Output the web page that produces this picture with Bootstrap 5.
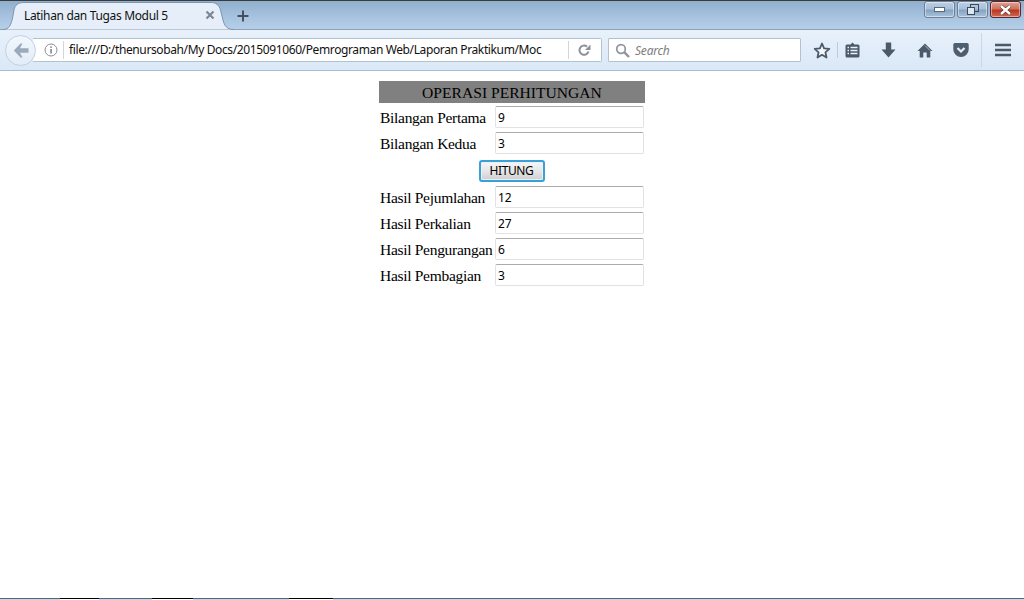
<!DOCTYPE html>
<html lang="id">
<head>
<meta charset="utf-8">
<title>Latihan dan Tugas Modul 5</title>
<link href="https://cdn.jsdelivr.net/npm/bootstrap@5.3.0/dist/css/bootstrap.min.css" rel="stylesheet">
<style>
html,body{height:600px;overflow:hidden;background:#fff}
body{font-family:"Open Sans","Noto Sans",sans-serif;color:#000;display:flex;flex-direction:column}
.titlebar{height:30px;flex:none;background:linear-gradient(#8fafcd,#a9c4e0 60%,#b5cfe9);border-top:1px solid #3b3b3b;border-bottom:1px solid #8fa0b2;padding-left:3px}
.ff-tab{width:234px;height:29px;flex:none;position:relative;margin-bottom:-1px}
.ff-tab svg{display:block}
.tab-title{position:absolute;left:21px;top:6px;font-size:12px;line-height:17px;color:#111;white-space:nowrap;font-family:"Noto Sans",sans-serif;letter-spacing:-.34px}
.tab-close{position:absolute;left:202px;top:9px}
.newtab{margin-top:9px}
.winbtns{margin-left:auto;margin-right:3px;height:18px}
.winbtn{width:31px;height:17px;border:1px solid #6d7f94;border-radius:3px;background:linear-gradient(#bcd0e5,#a8c0da 45%,#86a3c2 55%,#a9c3dd);box-shadow:inset 0 0 0 1px rgba(255,255,255,.45);display:flex;align-items:center;justify-content:center;margin-left:2px}
.winbtn.closer{background:linear-gradient(#e2a294,#d0705c 45%,#b9371f 55%,#cf6a55);border-color:#5a2530;width:31px}
.toolbar{height:41px;flex:none;background:linear-gradient(#e8f1fb,#dae8f7);border-bottom:1px solid #a9bdd0;padding-left:5px}
.backbtn{width:31px;height:31px;flex:none;border-radius:50%;background:linear-gradient(#f2f7fd,#e2ecf7);border:1px solid #c3d0de;position:relative;z-index:1}
.urlbox{width:569px;height:24px;flex:none;margin-left:-3px;background:#fff;border:1px solid #b4c2d0;border-left:0;border-radius:0 2px 2px 0}
.urlicon{width:30px;flex:none;padding-left:11px}
.vsep{width:1px;height:18px;background:#cfd6dd;flex:none}
.urltext{width:479px;flex:none;padding-left:5px;font-size:12px;line-height:16px;white-space:nowrap;color:#111;font-family:"Noto Sans",sans-serif;letter-spacing:-.38px}
.reload{flex:none;margin-left:9px}
.urlsep{margin-left:25px}
.searchbox{width:193px;height:24px;flex:none;margin-left:6px;background:#fff;border:1px solid #b4c2d0;border-radius:1px;padding-left:6px;gap:5px}
.searchtext{font-size:12px;font-style:italic;color:#7d7d7d;font-family:"Noto Sans",sans-serif;letter-spacing:-.2px;padding-top:1px}
.tbicons{margin-left:12px;height:100%}
.tbi{flex:none;display:block}
.tbsep{width:1px;height:16px;background:#bccbdb;flex:none;margin:0 7px 0 6px}
.tbsep2{width:1px;height:34px;background:#cad8e6;flex:none;margin-left:12px}
.gap-21{margin-left:21px}
.gap-20{margin-left:20px}
.gap-13{margin-left:13px}
.pagearea{flex:1 1 auto;min-height:0;padding-top:10px}
.calc{width:266px;margin-left:379px;font-family:"Liberation Serif",serif;font-size:15.5px;line-height:18px;letter-spacing:-.3px}
.calc-head{height:22px;background:#808080;text-align:center;line-height:22px;padding-top:1px;font-size:15.6px;letter-spacing:0;margin-bottom:3px}
.calc-row{height:22px;margin-bottom:4px;padding-left:1px}
.calc-row label{width:115px;flex:none;white-space:nowrap;margin:0;padding-top:1px}
.calc-row input{width:149px;height:22px;flex:none;border:1px solid #e0e2ea;border-top-color:#ababab;border-radius:2px;padding:0 2px;font-family:"Noto Sans",sans-serif;font-size:12px;letter-spacing:0;color:#000;background:#fff;outline:0}
.calc-btnrow{height:24px;margin-bottom:4px;padding-right:1px;align-items:flex-end}
.hitung{width:66px;height:22px;padding:0;border:2px solid #3aa0d8;border-radius:3px;background:linear-gradient(#f6f6f6,#e6e6e6 50%,#cfcfcf);font-family:"Noto Sans",sans-serif;font-size:12px;letter-spacing:-.4px;color:#000;line-height:16px;box-shadow:inset 0 0 0 1px #efefef}
.strip{height:2px;flex:none}
.strip i{display:block;height:2px;background:#c5d6e6;border-top:1px solid #56677a}
.strip b{display:block;height:2px;background:#fff;border-top:1px solid #000}
</style>
</head>
<body>
<div class="titlebar d-flex align-items-end">
  <div class="ff-tab">
    <svg width="234" height="29" viewBox="0 0 234 29"><path d="M0 28.5C6 28.5 8 24 9.5 17L11 9C12 4 15 1.5 21 1.5H208C213 1.5 216 4 217.500 9L220 19C221.500 25 224 28.500 231 28.500" fill="#e6eff9" stroke="#7e95ad"/></svg>
    <span class="tab-title">Latihan dan Tugas Modul 5</span>
    <svg class="tab-close" width="10" height="10" viewBox="0 0 10 10"><path d="M1.500 1.500L8.500 8.500M8.500 1.500L1.500 8.500" stroke="#7b8794" stroke-width="2.200"/></svg>
  </div>
  <svg class="newtab align-self-start" width="12" height="12" viewBox="0 0 12 12"><path d="M6 0.500V11.500M0.500 6H11.500" stroke="#46505c" stroke-width="2"/></svg>
  <div class="winbtns d-flex align-self-start">
    <div class="winbtn"><svg width="11" height="5" viewBox="0 0 11 5"><rect x=".5" y=".5" width="10" height="4" fill="#fff" stroke="#56687c"/></svg></div>
    <div class="winbtn"><svg width="12" height="11" viewBox="0 0 12 11"><rect x="3.500" y=".5" width="8" height="7" fill="none" stroke="#3d4a59"/><rect x=".5" y="3.500" width="7" height="7" fill="#dce7f2" stroke="#3d4a59"/></svg></div>
    <div class="winbtn closer"><svg width="13" height="10" viewBox="0 0 13 10"><path d="M2 1L11 9M11 1L2 9" stroke="#4a2a2a" stroke-width="3.600"/><path d="M2 1L11 9M11 1L2 9" stroke="#fff" stroke-width="2.400"/></svg></div>
  </div>
</div>
<div class="toolbar d-flex align-items-center">
  <div class="backbtn d-flex align-items-center justify-content-center">
    <svg width="16" height="15" viewBox="0 0 16 15"><path d="M7.500 .5L.8 7.500L7.500 14.500H9.500L7 9.700H15.500V5.300H7L9.500 .5Z" fill="#9aaaba"/></svg>
  </div>
  <div class="urlbox d-flex align-items-center">
    <div class="urlicon"><svg class="d-block" width="14" height="14" viewBox="0 0 14 14"><circle cx="7" cy="7" r="6" fill="#fff" stroke="#8b8f94"/><rect x="6.300" y="6" width="1.500" height="4.500" fill="#7a7e84"/><rect x="6.300" y="3.400" width="1.500" height="1.500" fill="#7a7e84"/></svg></div>
    <div class="vsep"></div>
    <div class="urltext">file:///D:/thenursobah/My Docs/2015091060/Pemrograman Web/Laporan Praktikum/Moc</div>
    <div class="vsep urlsep"></div>
    <svg class="reload" width="13" height="12" viewBox="0 0 13 12"><path d="M10.500 7.500A4.600 4.600 0 1 1 9 2.600" fill="none" stroke="#8b9199" stroke-width="2"/><path d="M12.500 .5V6H7Z" fill="#8b9199"/></svg>
  </div>
  <div class="searchbox d-flex align-items-center">
    <svg width="15" height="15" viewBox="0 0 15 15"><circle cx="6" cy="6" r="4.300" fill="none" stroke="#8f959b" stroke-width="1.700"/><path d="M9.200 9.200L14 14" stroke="#8f959b" stroke-width="2.400"/></svg>
    <span class="searchtext">Search</span>
  </div>
  <div class="tbicons d-flex align-items-center">
    <svg class="tbi" width="18" height="17" viewBox="0 0 18 17"><path d="M9 1.500L11.100 6.300L16.300 6.800L12.400 10.300L13.500 15.500L9 12.800L4.500 15.500L5.600 10.300L1.700 6.800L6.900 6.300Z" fill="#f4f8fc" stroke="#4b5a6a" stroke-width="1.800" stroke-linejoin="round"/></svg>
    <div class="tbsep"></div>
    <svg class="tbi" width="15" height="16" viewBox="0 0 15 16"><path d="M5.500 2.500L7.500 .5L9.500 2.500H13A1.500 1.500 0 0 1 14.500 4V14A1.500 1.500 0 0 1 13 15.500H2A1.500 1.500 0 0 1 .5 14V4A1.500 1.500 0 0 1 2 2.500Z" fill="#4b5a6a"/><path d="M2.500 5.500H4M5.500 5.500H12.500M2.500 8.500H4M5.500 8.500H12.500M2.500 11.500H4M5.500 11.500H12.500" stroke="#eaf1f8" stroke-width="1.300"/></svg>
    <svg class="tbi gap-21" width="15" height="16" viewBox="0 0 15 16"><path d="M4.800 .5H10.200V7.500H14.500L7.500 15.500L.5 7.500H4.800Z" fill="#4b5a6a"/></svg>
    <svg class="tbi gap-21" width="16" height="15" viewBox="0 0 16 15"><path d="M8 .5L15.500 8H13.300V14.500H9.700V9.500H6.300V14.500H2.700V8H.5Z" fill="#4b5a6a"/><path d="M8 2.500L13 7.500" stroke="#eaf1f8" stroke-width=".6"/></svg>
    <svg class="tbi gap-20" width="16" height="14" viewBox="0 0 16 14"><path d="M1.800 0H14.200A1.500 1.500 0 0 1 15.700 1.500V6.500A7.700 7.500 0 0 1 .3 6.500V1.500A1.500 1.500 0 0 1 1.800 0Z" fill="#4f5e6e"/><path d="M4.500 5L8 8.500L11.500 5" fill="none" stroke="#e6eef7" stroke-width="2.200"/></svg>
    <div class="tbsep2"></div>
    <svg class="tbi gap-13" width="16" height="14" viewBox="0 0 16 14"><path d="M0 2H16M0 7H16M0 12H16" stroke="#4b5a6a" stroke-width="2.500"/></svg>
  </div>
</div>
<main class="pagearea">
  <form class="calc">
    <div class="calc-head">OPERASI PERHITUNGAN</div>
    <div class="calc-row d-flex align-items-center"><label for="a">Bilangan Pertama</label><input id="a" type="text" value="9"></div>
    <div class="calc-row d-flex align-items-center"><label for="b">Bilangan Kedua</label><input id="b" type="text" value="3"></div>
    <div class="calc-btnrow d-flex justify-content-center"><button type="button" class="hitung">HITUNG</button></div>
    <div class="calc-row d-flex align-items-center"><label for="c">Hasil Pejumlahan</label><input id="c" type="text" value="12"></div>
    <div class="calc-row d-flex align-items-center"><label for="d">Hasil Perkalian</label><input id="d" type="text" value="27"></div>
    <div class="calc-row d-flex align-items-center"><label for="e">Hasil Pengurangan</label><input id="e" type="text" value="6"></div>
    <div class="calc-row d-flex align-items-center"><label for="f">Hasil Pembagian</label><input id="f" type="text" value="3"></div>
  </form>
</main>
<div class="strip d-flex">
  <i style="width:60px"></i><b style="width:39px"></b><i style="width:53px"></i><b style="width:41px"></b><i style="width:96px"></i><b style="width:44px"></b><i style="width:691px"></i>
</div>
</body>
</html>
